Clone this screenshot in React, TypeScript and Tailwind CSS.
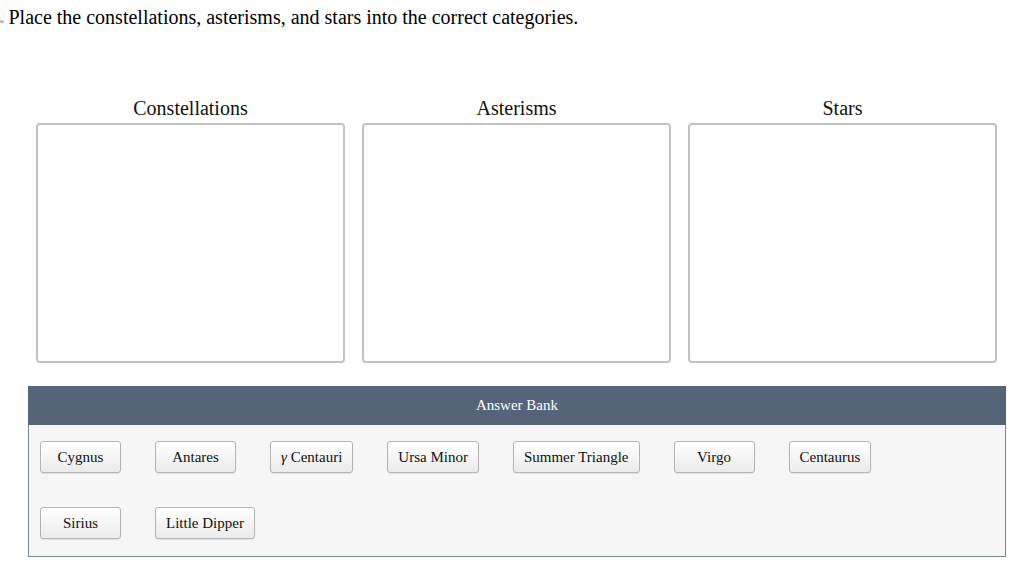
import React from "react";

const categories = ["Constellations", "Asterisms", "Stars"];

const rowOne = ["Cygnus", "Antares", "γ Centauri", "Ursa Minor", "Summer Triangle", "Virgo", "Centaurus"];
const rowTwo = ["Sirius", "Little Dipper"];

const Chip = ({ label }: { label: string }) => {
    const isGreek = label.startsWith("γ");
    return (
        <button className="h-[32px] min-w-[81px] px-[10px] rounded-[3px] border border-[#b4b4b4] bg-gradient-to-b from-white to-[#ebebeb] shadow-[0_1px_1px_rgba(0,0,0,0.08)] text-[15px] text-[#111] leading-none">
            {isGreek ? (
                <>
                    <span className="italic">γ</span>
                    {label.slice(1)}
                </>
            ) : (
                label
            )}
        </button>
    );
};

const App = () => {
    return (
        <div className="relative w-[1024px] h-[586px] bg-white overflow-hidden font-['Liberation_Serif',serif]">
            {/* Question text */}
            <div className="flex items-start pt-[5px] h-[44px]">
                <span className="mt-[13px] text-[7px] leading-none text-[#333]">o</span>
                <p className="ml-[5px] text-[20px] leading-[24px] text-black">
                    Place the constellations, asterisms, and stars into the correct categories.
                </p>
            </div>

            {/* Drop zones */}
            <div className="mt-[52px] ml-[36px] grid grid-cols-[309px_309px_309px] gap-x-[17px]">
                {categories.map((c) => (
                    <div key={c} className="flex flex-col items-center">
                        <h2 className="text-[20px] leading-[24px] text-[#111] mb-[3px]">{c}</h2>
                        <div className="w-full h-[240px] border-2 border-[#c2c2c2] rounded-[4px] bg-white" />
                    </div>
                ))}
            </div>

            {/* Answer bank */}
            <section className="mt-[23px] ml-[28px] w-[978px]">
                <div className="h-[39px] bg-[#556479] flex items-center justify-center">
                    <span className="text-white text-[15px]">Answer Bank</span>
                </div>
                <div className="h-[132px] bg-[#f6f6f6] border-x border-b border-[#7c8594] pl-[11px] pt-[16px] flex flex-col gap-[34px]">
                    <div className="flex gap-x-[34px]">
                        {rowOne.map((l) => (
                            <Chip key={l} label={l} />
                        ))}
                    </div>
                    <div className="flex gap-x-[34px]">
                        {rowTwo.map((l) => (
                            <Chip key={l} label={l} />
                        ))}
                    </div>
                </div>
            </section>
        </div>
    );
};

export default App;
